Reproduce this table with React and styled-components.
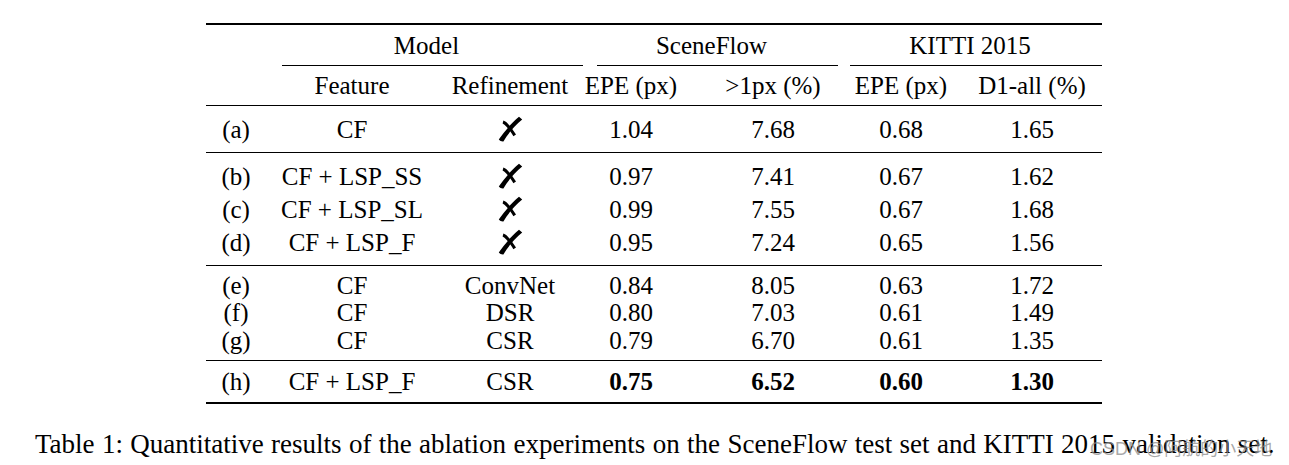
import React from 'react';
import styled, { createGlobalStyle } from 'styled-components';

const GlobalStyle = createGlobalStyle`
  html, body {
    margin: 0;
    background: #fff;
  }
  body {
    font-family: "Liberation Serif", "Times New Roman", serif;
    color: #000;
  }
`;

// column tracks, chosen so every cell is centred on the column of the reference
const COLS = '32px 200px 116px 126px 158px 98px 164px';

const Page = styled.div`
  position: relative;
  width: 1289px;
  height: 465px;
  padding-top: 23px;
  box-sizing: border-box;
  overflow: hidden;
`;

const Table = styled.div`
  width: 896px;
  margin-left: 206px;
  font-size: 25px;
  line-height: 1;
`;

const Rule = styled.div`
  height: ${(p) => p.$w || 1}px;
  width: ${(p) => (p.$len ? `${p.$len}px` : 'auto')};
  margin-left: ${(p) => p.$ml || 0}px;
  background: #000;
  flex: none;
`;

const RuleRow = styled.div`
  display: flex;
`;

const GroupHead = styled.div`
  display: flex;
  height: 40px;
  align-items: center;
`;

const GroupTitle = styled.div`
  flex: none;
  width: ${(p) => p.$len}px;
  margin-left: ${(p) => p.$ml}px;
  padding-right: 12px;
  box-sizing: border-box;
  text-align: center;
  white-space: nowrap;
`;

const Row = styled.div`
  display: grid;
  grid-template-columns: ${COLS};
  margin-left: 14px;
  height: ${(p) => p.$h}px;
  align-items: center;
`;

const Cell = styled.div`
  display: flex;
  justify-content: center;
  align-items: center;
  white-space: nowrap;
  font-weight: ${(p) => (p.$bold ? 700 : 400)};
`;

const Block = styled.div`
  padding: ${(p) => p.$pad}px 0;
`;

const Caption = styled.div`
  margin: 25px 0 0 35px;
  font-size: 27px;
  line-height: 30px;
  word-spacing: 0.6px;
  white-space: nowrap;
`;

const Watermark = styled.div`
  position: absolute;
  left: 1090px;
  top: 434px;
  font-family: "Liberation Sans", "Noto Sans CJK SC", sans-serif;
  font-size: 18px;
  color: rgba(140, 140, 140, 0.75);
  white-space: nowrap;
`;

const Cross = () => (
  <svg width="25" height="26" viewBox="0 0 25 26">
    <path d="M0.8 23.6 C5.5 16.5 12.6 7.8 21 0.8 L24.2 3.6 C16.2 10.4 9.6 18.2 5.4 25.4 C3.8 25.6 1.8 25 0.8 23.6 Z" fill="#000" />
    <path d="M5.4 4.6 C8.8 5.6 12 9.6 18 18.6 L15.4 20.2 C11 13.2 8.2 9.4 4.6 7.4 Z" fill="#000" />
  </svg>
);

const groups = [
  {
    pad: 0,
    h: 46,
    rows: [['(a)', 'CF', null, '1.04', '7.68', '0.68', '1.65']],
  },
  {
    pad: 6.5,
    h: 33,
    rows: [
      ['(b)', 'CF + LSP_SS', null, '0.97', '7.41', '0.67', '1.62'],
      ['(c)', 'CF + LSP_SL', null, '0.99', '7.55', '0.67', '1.68'],
      ['(d)', 'CF + LSP_F', null, '0.95', '7.24', '0.65', '1.56'],
    ],
  },
  {
    pad: 5.5,
    h: 27.5,
    rows: [
      ['(e)', 'CF', 'ConvNet', '0.84', '8.05', '0.63', '1.72'],
      ['(f)', 'CF', 'DSR', '0.80', '7.03', '0.61', '1.49'],
      ['(g)', 'CF', 'CSR', '0.79', '6.70', '0.61', '1.35'],
    ],
  },
  {
    pad: 0,
    h: 41,
    best: true,
    rows: [['(h)', 'CF + LSP_F', 'CSR', '0.75', '6.52', '0.60', '1.30']],
  },
];

const DataRow = ({ row, h, best }) => {
  const [label, feature, refine, ...nums] = row;
  return (
    <Row $h={h}>
      <Cell>{label}</Cell>
      <Cell>{feature}</Cell>
      <Cell>{refine || <Cross />}</Cell>
      {nums.map((n, i) => (
        <Cell key={i} $bold={best}>
          {n}
        </Cell>
      ))}
    </Row>
  );
};

export default function App() {
  return (
    <Page>
      <GlobalStyle />
      <Table>
        <Rule $w={2} />
        <GroupHead>
          <GroupTitle $ml={76} $len={301}>Model</GroupTitle>
          <GroupTitle $ml={14} $len={241}>SceneFlow</GroupTitle>
          <GroupTitle $ml={12} $len={252}>KITTI 2015</GroupTitle>
        </GroupHead>
        <RuleRow>
          <Rule $ml={76} $len={301} />
          <Rule $ml={14} $len={241} />
          <Rule $ml={12} $len={252} />
        </RuleRow>
        <Row $h={39}>
          <Cell />
          <Cell>Feature</Cell>
          <Cell>Refinement</Cell>
          <Cell>EPE (px)</Cell>
          <Cell>&gt;1px (%)</Cell>
          <Cell>EPE (px)</Cell>
          <Cell>D1-all (%)</Cell>
        </Row>
        {groups.map((g, gi) => (
          <React.Fragment key={gi}>
            <Rule $w={1} />
            <Block $pad={g.pad}>
              {g.rows.map((r) => (
                <DataRow key={r[0]} row={r} h={g.h} best={g.best} />
              ))}
            </Block>
          </React.Fragment>
        ))}
        <Rule $w={2} />
      </Table>
      <Caption>
        Table 1: Quantitative results of the ablation experiments on the SceneFlow test set and KITTI 2015 validation set.
      </Caption>
      <Watermark>CSDN @阿航的小天地</Watermark>
    </Page>
  );
}
